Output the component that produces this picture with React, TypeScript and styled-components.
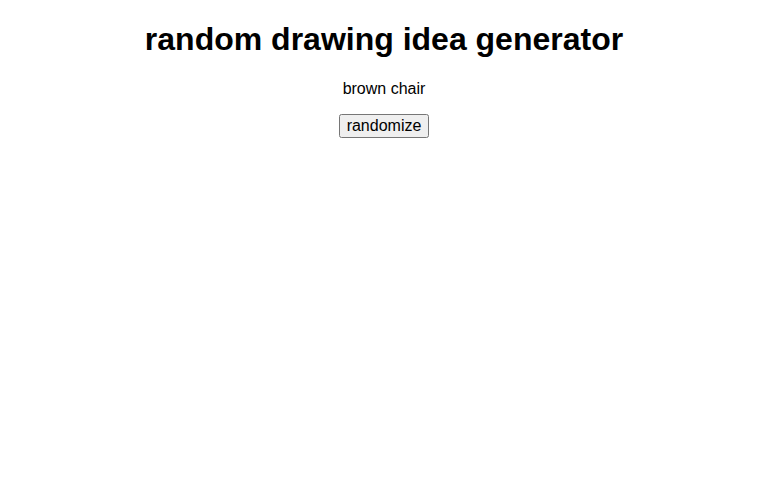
import { useState } from "react";
import styled, { createGlobalStyle } from "styled-components";

const GlobalStyle = createGlobalStyle`
  body {
    margin: 0;
    font-family: "Liberation Sans", Arial, sans-serif;
    background: #fff;
    color: #000;
  }
`;

const Page = styled.div`
  text-align: center;
`;

const Title = styled.h1`
  font-size: 2em;
  font-weight: bold;
  margin: 0.67em 0;
`;

const Idea = styled.p`
  font-size: 16px;
  margin: 16px 0;
`;

const RandomizeButton = styled.button`
  font-family: "Liberation Sans", Arial, sans-serif;
  font-size: 16px;
`;

const colors = ["brown", "red", "blue", "green", "yellow", "purple"];
const things = ["chair", "cat", "tree", "house", "car", "lamp"];

export default function App() {
  const [idea, setIdea] = useState("brown chair");

  const randomize = () => {
    const c = colors[Math.floor(Math.random() * colors.length)];
    const t = things[Math.floor(Math.random() * things.length)];
    setIdea(`${c} ${t}`);
  };

  return (
    <>
      <GlobalStyle />
      <Page>
        <Title>random drawing idea generator</Title>
        <Idea>{idea}</Idea>
        <RandomizeButton onClick={randomize}>randomize</RandomizeButton>
      </Page>
    </>
  );
}
